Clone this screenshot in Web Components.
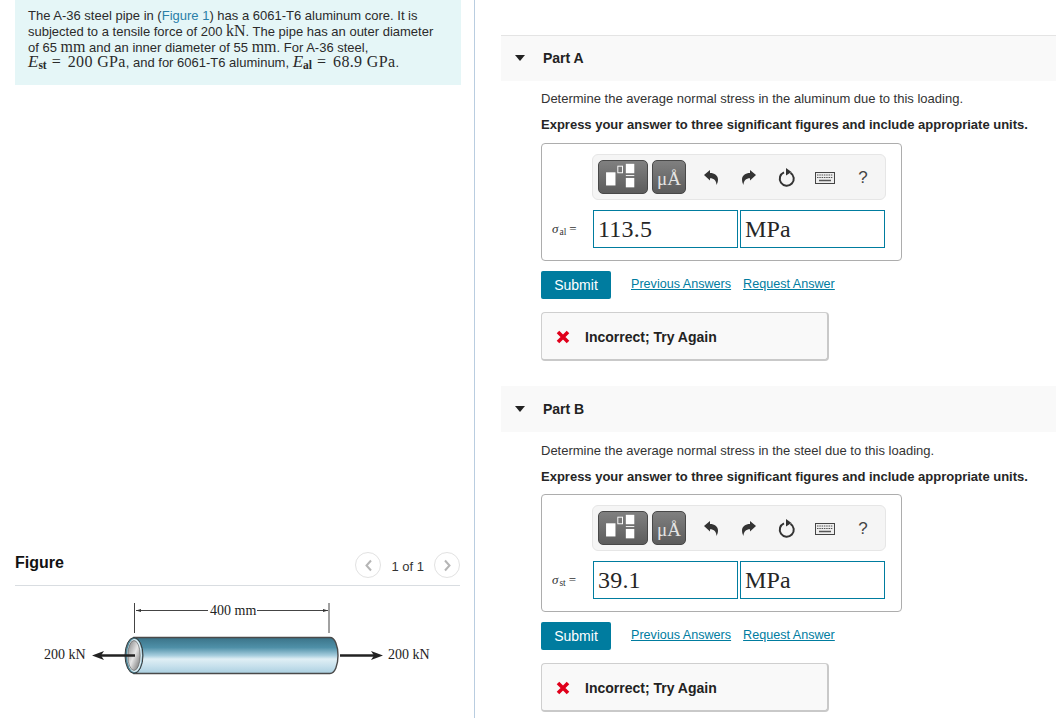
<!DOCTYPE html>
<html lang="en">
<head>
<meta charset="utf-8">
<title>Mastering problem</title>
<style>
  html,body{ margin:0; padding:0; background:#fff; }
  body{ width:1056px; height:718px; overflow:hidden; font-family:"Liberation Sans",Arial,sans-serif; color:#212121; }
  .page{ display:grid; grid-template-columns:475px 1fr; height:718px; }
</style>
</head>
<body>
<div class="page">
  <left-pane>
    <intro-box></intro-box>
    <figure-panel></figure-panel>
  </left-pane>
  <div>
    <part-block name="Part A" prompt="Determine the average normal stress in the aluminum due to this loading." sym="al" value="113.5" first></part-block>
    <part-block name="Part B" prompt="Determine the average normal stress in the steel due to this loading." sym="st" value="39.1"></part-block>
  </div>
</div>

<script>
(() => {
  'use strict';

  class LeftPane extends HTMLElement {
    constructor() {
      super();
      this.attachShadow({ mode: 'open' }).innerHTML = `
        <style>
          :host{ display:flex; flex-direction:column; justify-content:space-between; height:718px; box-sizing:border-box; padding:0 13px 0 15px; border-right:1px solid #b9cde0; }
        </style>
        <slot></slot>`;
    }
  }

  class IntroBox extends HTMLElement {
    constructor() {
      super();
      this.attachShadow({ mode: 'open' }).innerHTML = `
        <style>
          :host{ display:block; height:85px; box-sizing:border-box; padding:8px 13px 0; background:#e5f6f7; font:13px/15.800px "Liberation Sans",Arial,sans-serif; color:#2b2b2b; }
          a{ color:#2a7fa8; text-decoration:none; }
          .m{ font-family:"Liberation Serif","Times New Roman",serif; font-size:16px; line-height:0; }
          .eq{ margin:0 7px 0 5px; }
          .w{ letter-spacing:.35px; }
          i{ font-family:"Liberation Serif",serif; font-size:17px; line-height:0; }
          sub{ font-size:11.500px; line-height:0; vertical-align:-2px; font-family:"Liberation Serif",serif; font-weight:bold; }
        </style>
        The A-36 steel pipe in (<a>Figure 1</a>) has a 6061-T6 aluminum core. It is<br>
        subjected to a tensile force of 200 <span class="m">kN</span>. The pipe has an outer diameter<br>
        of 65 <span class="m">mm</span> and an inner diameter of 55 <span class="m">mm</span>. For A-36 steel,<br>
        <i>E</i><sub>st</sub><span class="m eq">=</span><span class="m w">200 GPa</span>, and for 6061-T6 aluminum, <i>E</i><sub>al</sub><span class="m eq">=</span><span class="m w">68.9 GPa</span>.`;
    }
  }

  class FigurePanel extends HTMLElement {
    constructor() {
      super();
      this.attachShadow({ mode: 'open' }).innerHTML = `
        <style>
          :host{ display:block; }
          .head{ display:flex; align-items:center; height:38px; margin-right:1px; border-bottom:1px solid #d9dde1; }
          h3{ margin:0; padding-bottom:6px; font:bold 16px/20px "Liberation Sans",Arial,sans-serif; color:#111; flex:1; }
          .count{ font-size:13px; color:#333; margin:0 10px; padding-top:1px; }
          .nav{ width:26px; height:26px; margin-bottom:2px; box-sizing:border-box; border:1px solid #e2e2e2; border-radius:50%; display:flex; align-items:center; justify-content:center; }
          svg.fig{ display:block; }
          svg text{ font-family:"Liberation Serif","Times New Roman",serif; font-size:14px; fill:#222; }
        </style>
        <div class="head">
          <h3>Figure</h3>
          <span class="nav"><svg width="9" height="13" viewBox="0 0 9 13"><path d="M7 1.500 2.500 6.500 7 11.500" fill="none" stroke="#b5b5b5" stroke-width="2"/></svg></span>
          <span class="count">1 of 1</span>
          <span class="nav"><svg width="9" height="13" viewBox="0 0 9 13"><path d="M2 1.500 6.500 6.500 2 11.500" fill="none" stroke="#b5b5b5" stroke-width="2"/></svg></span>
        </div>
        <svg class="fig" width="446" height="132" viewBox="15 586 446 132">
          <defs>
            <linearGradient id="pipe" x1="0" y1="0" x2="0" y2="1">
              <stop offset="0" stop-color="#3a7388"/>
              <stop offset=".28" stop-color="#4f90a8"/>
              <stop offset=".5" stop-color="#a6cddd"/>
              <stop offset=".6" stop-color="#e0eff5"/>
              <stop offset=".8" stop-color="#c6e0ec"/>
              <stop offset="1" stop-color="#aacfe0"/>
            </linearGradient>
            <linearGradient id="core" x1="0" y1="0" x2="1" y2="1">
              <stop offset="0" stop-color="#7d7d7d"/>
              <stop offset=".5" stop-color="#e6e6e6"/>
              <stop offset="1" stop-color="#666"/>
            </linearGradient>
          </defs>
          <path d="M134.500 603V633M329 603V633" stroke="#444" stroke-width="1"/>
          <path d="M136 610.500H208M257 610.500H328" stroke="#444" stroke-width="1"/>
          <path d="M136 610.500l5-1.500v3zM328 610.500l-5-1.500v3z" fill="#333"/>
          <text x="210" y="615">400 mm</text>
          <path d="M134 637.500H330C335 637.500 338 646 338 655.500S335 673.500 330 673.500H134Z" fill="url(#pipe)" stroke="#4a4a4a" stroke-width="1.400"/>
          <ellipse cx="134" cy="655.500" rx="9" ry="18" fill="#4d8496" stroke="#3b3b3b"/>
          <ellipse cx="134.500" cy="655.500" rx="7.500" ry="16.500" fill="#dff0f6"/>
          <ellipse cx="134" cy="655.500" rx="6.200" ry="15" fill="url(#core)" stroke="#555" stroke-width=".6"/>
          <path d="M100 655.500H135" stroke="#222" stroke-width="2.400"/>
          <path d="M92 655.500 104 651 101 655.500 104 660Z" fill="#222"/>
          <path d="M340 655.500H374" stroke="#222" stroke-width="2.400"/>
          <path d="M383 655.500 371 651 374 655.500 371 660Z" fill="#222"/>
          <text x="44" y="659">200 kN</text>
          <text x="388" y="659">200 kN</text>
        </svg>`;
    }
  }

  class MathToolbar extends HTMLElement {
    constructor() {
      super();
      this.attachShadow({ mode: 'open' }).innerHTML = `
        <style>
          :host{ display:flex; align-items:center; width:294px; height:46px; box-sizing:border-box; padding-left:5px; background:#f5f5f5; border:1px solid #e6e6e6; border-radius:6px; }
          .btn{ height:34px; box-sizing:border-box; border:1px solid #484848; border-radius:5px; background:linear-gradient(#808080,#5c5c5c); margin-right:4px; display:block; }
          .cell{ width:38px; height:34px; display:flex; align-items:center; justify-content:center; padding-top:1px; box-sizing:border-box; }
          .cells{ display:flex; margin-left:2px; }
          .q{ font:17px "Liberation Sans",Arial,sans-serif; color:#444; }
          .mu{ width:34px; display:flex; align-items:center; justify-content:center; padding-top:3px; color:#e4e4e4; font:19px "Liberation Serif",serif; white-space:nowrap; }
        </style>
        <svg class="btn" width="50" height="34" viewBox="0 0 50 34">
          <rect x="7" y="12" width="10" height="14" fill="#fff"/>
          <rect x="19.500" y="5.500" width="5" height="7" fill="none" stroke="#fff"/>
          <rect x="28" y="3" width="9" height="10" fill="#fff"/>
          <rect x="28" y="15" width="9" height="1" fill="#fff"/>
          <rect x="28" y="18" width="9" height="10" fill="#fff"/>
        </svg>
        <span class="btn mu">μÅ</span>
        <div class="cells">
          <span class="cell"><svg width="16" height="17" viewBox="0 0 16 17"><path d="M1 6 7 1V4C11.500 4 15 6.500 15 10.500 15 12.800 14.300 14.500 13.500 16 13.500 11.800 11 9.300 7 9.300V11.500Z" fill="#333"/></svg></span>
          <span class="cell"><svg width="16" height="17" viewBox="0 0 16 17"><path d="M15 6 9 1V4C4.500 4 1 6.500 1 10.500 1 12.800 1.700 14.500 2.500 16 2.500 11.800 5 9.300 9 9.300V11.500Z" fill="#333"/></svg></span>
          <span class="cell"><svg width="18" height="19" viewBox="0 0 18 19"><path d="M12.500 4.800A7 7 0 1 1 6 4.300" fill="none" stroke="#333" stroke-width="2"/><path d="M8 0 13.500 4 8 7.500Z" fill="#333"/></svg></span>
          <span class="cell"><svg width="20" height="12" viewBox="0 0 20 12"><rect x=".5" y=".5" width="19" height="11" fill="#eee" stroke="#444"/><path d="M2 3H18M2 5.500H18" stroke="#555" stroke-dasharray="1.500 .8"/><path d="M4 8.500H16" stroke="#555" stroke-width="1.500"/></svg></span>
          <span class="cell q">?</span>
        </div>`;
    }
  }

  class AnswerBox extends HTMLElement {
    constructor() {
      super();
      const sym = this.getAttribute('sym');
      const value = this.getAttribute('value');
      this.attachShadow({ mode: 'open' }).innerHTML = `
        <style>
          :host{ display:block; width:361px; height:118px; box-sizing:border-box; padding:10px 0 0 50px; border:1px solid #adadad; border-radius:4px; }
          .row{ display:flex; margin-top:10px; margin-left:1px; }
          .label{ width:41px; margin-left:-41px; display:flex; align-items:center; font:13px "Liberation Serif",serif; color:#333; white-space:nowrap; }
          .label i{ font-size:13px; }
          .label sub{ font-size:9.500px; line-height:0; margin:5px 3px 0 1px; }
          .field{ width:145px; height:38px; box-sizing:border-box; border:1px solid #007c9f; padding-left:4px; font:24px/36px "Liberation Serif","Times New Roman",serif; letter-spacing:.2px; color:#262626; }
          .field + .field{ margin-left:2px; }
        </style>
        <math-toolbar></math-toolbar>
        <div class="row">
          <span class="label"><i>σ</i><sub>${sym}</sub>=</span>
          <div class="field">${value}</div>
          <div class="field">MPa</div>
        </div>`;
    }
  }

  class FeedbackBox extends HTMLElement {
    constructor() {
      super();
      this.attachShadow({ mode: 'open' }).innerHTML = `
        <style>
          :host{ display:flex; align-items:center; width:288px; height:49px; box-sizing:border-box; padding:1px 0 0 14px; background:#f9f9f9; border:1px solid #cfcfcf; border-right:2px solid #c9c9c9; border-bottom:2px solid #c9c9c9; border-radius:4px; font:bold 14px "Liberation Sans",Arial,sans-serif; color:#222; }
          svg{ margin-right:15px; }
        </style>
        <svg width="14" height="14" viewBox="0 0 14 14"><path d="M2 2 12 12M12 2 2 12" stroke="#e0001b" stroke-width="3.600"/></svg>
        <slot></slot>`;
    }
  }

  class PartBlock extends HTMLElement {
    constructor() {
      super();
      const a = (n) => this.getAttribute(n);
      const first = a('first') !== null;
      this.attachShadow({ mode: 'open' }).innerHTML = `
        <style>
          :host{ display:block; height:351px; padding-left:26px; box-sizing:border-box; font-family:"Liberation Sans",Arial,sans-serif; color:#222; }
          :host([first]){ padding-top:35px; height:386px; }
          .bar{ display:flex; align-items:center; height:46px; background:#f9f9f9; box-sizing:border-box; }
          :host([first]) .bar{ border-top:1px solid #e4e4e4; padding-bottom:2px; }
          .tri{ width:0; height:0; margin:0 18px 0 14px; border:5.500px solid transparent; border-top:6px solid #222; border-bottom:0; }
          .bar b{ font-size:14px; color:#222; }
          .body{ padding:10px 0 0 40px; }
          p{ margin:0; font-size:13px; line-height:16px; color:#333; }
          p.strong{ font-weight:bold; margin-top:10px; margin-bottom:${first ? 10 : 9}px; color:#262626; }
          .actions{ display:flex; align-items:center; margin:10px 0 13px; }
          .submit{ width:70px; height:28px; background:#007c9f; color:#fff; border-radius:2px; font-size:14px; display:flex; align-items:center; justify-content:center; margin-right:20px; }
          a{ color:#007c9f; font-size:12.600px; text-decoration:underline; margin-right:12px; margin-bottom:2px; }
        </style>
        <div class="bar"><span class="tri"></span><b>${a('name')}</b></div>
        <div class="body">
          <p style="padding-top:${first ? 0 : 1}px">${a('prompt')}</p>
          <p class="strong">Express your answer to three significant figures and include appropriate units.</p>
          <answer-box sym="${a('sym')}" value="${a('value')}"></answer-box>
          <div class="actions">
            <span class="submit">Submit</span>
            <a>Previous Answers</a><a>Request Answer</a>
          </div>
          <feedback-box>Incorrect; Try Again</feedback-box>
        </div>`;
    }
  }

  customElements.define('left-pane', LeftPane);
  customElements.define('intro-box', IntroBox);
  customElements.define('figure-panel', FigurePanel);
  customElements.define('math-toolbar', MathToolbar);
  customElements.define('answer-box', AnswerBox);
  customElements.define('feedback-box', FeedbackBox);
  customElements.define('part-block', PartBlock);
})();
</script>
</body>
</html>
